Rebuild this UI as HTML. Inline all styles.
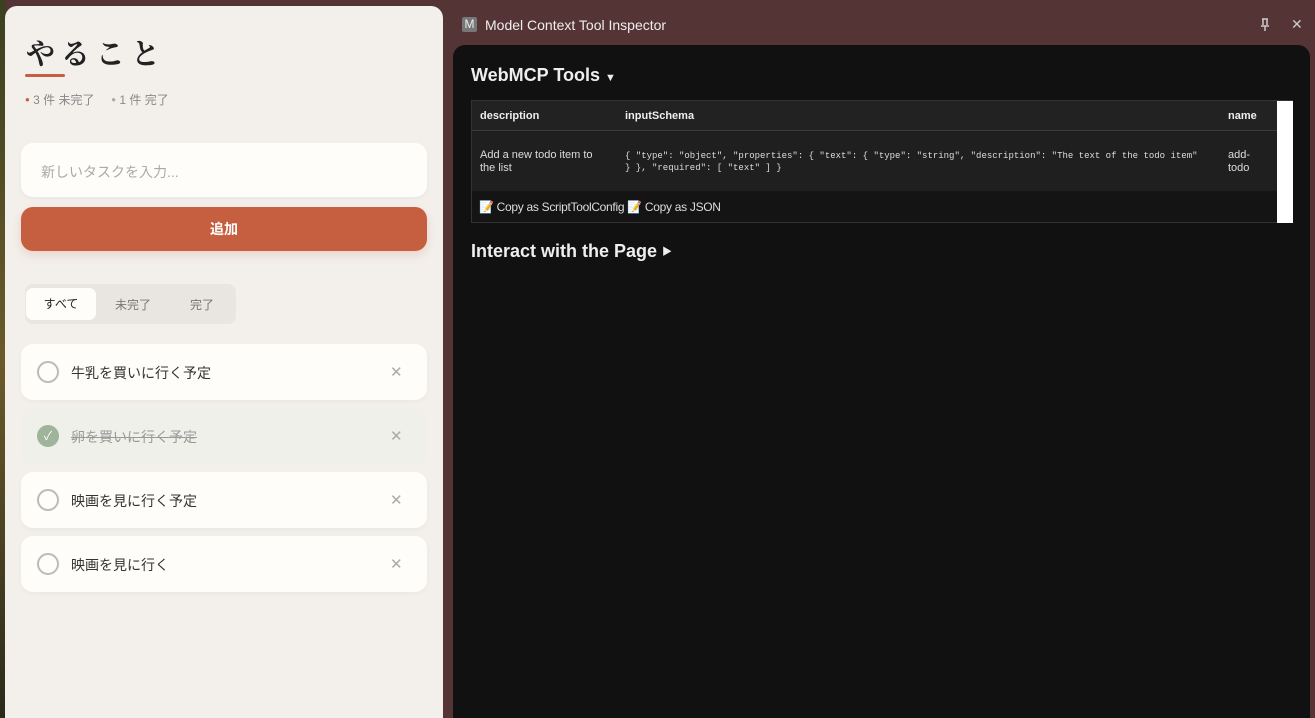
<!DOCTYPE html>
<html><head><meta charset="utf-8"><style>
*{box-sizing:border-box;margin:0;padding:0}
body{width:1315px;height:718px;overflow:hidden;background:#553436;font-family:"Liberation Sans","Noto Sans CJK JP",sans-serif;position:relative}
.bgl{position:absolute;left:0;top:0;width:6px;height:718px;background:linear-gradient(#3a4020,#6b5a2a,#2a2a1a)}
.left{position:absolute;left:5px;top:6px;width:438px;height:712px;background:#f3f0ec;border-radius:12px 12px 0 0}
.ab{position:absolute}
h1{position:absolute;left:21px;top:27px;font-family:"Noto Serif CJK SC","Noto Serif CJK JP",serif;font-size:29px;font-weight:700;letter-spacing:6px;color:#222;line-height:40px}
.card{position:absolute;left:16px;width:406px;background:#fffdfa;border-radius:12px;box-shadow:0 2px 6px rgba(0,0,0,0.04)}
.todo{height:56px;font-size:14px;color:#333}
.todo .c{position:absolute;left:16px;top:17px;width:22px;height:22px;border:2px solid #bbb;border-radius:50%}
.todo .t{position:absolute;left:50px;top:19px}
.todo .x{position:absolute;left:369px;top:19px;color:#aaa;font-size:15px}
.right{position:absolute;left:453px;top:45px;width:857px;height:673px;background:#111;border-radius:12px 12px 0 0}
.mono{font-family:"Liberation Mono","DejaVu Sans Mono",monospace}
</style></head><body>
<div class="bgl"></div>
<div class="left">
<h1>やること</h1>
<div class="ab" style="left:20px;top:68px;width:40px;height:3px;background:#c65f3f;border-radius:2px"></div>
<div class="ab" style="left:20px;top:85px;font-size:12px;color:#888"><span style="color:#c65f3f;font-size:8px;vertical-align:2px">●</span> 3 件 未完了 &nbsp;&nbsp;&nbsp; <span style="color:#aaa;font-size:8px;vertical-align:2px">●</span> 1 件 完了</div>
<div class="card" style="top:137px;height:54px"><span class="ab" style="left:20px;top:19px;font-size:14px;color:#aaa">新しいタスクを入力...</span></div>
<div class="ab" style="left:16px;top:201px;width:406px;height:44px;background:#c65f3f;border-radius:12px;color:#fff;font-weight:bold;font-size:14px;text-align:center;line-height:44px;box-shadow:0 4px 10px rgba(198,95,63,0.2)">追加</div>
<div class="ab" style="left:20px;top:278px;width:211px;height:40px;background:#e9e6e2;border-radius:8px"></div>
<div class="ab" style="left:21px;top:282px;width:70px;height:32px;background:#fffdfa;border-radius:7px;font-size:12px;text-align:center;line-height:32px;color:#222">すべて</div>
<div class="ab" style="left:110px;top:290px;font-size:12px;color:#777">未完了</div>
<div class="ab" style="left:185px;top:290px;font-size:12px;color:#777">完了</div>
<div class="card todo" style="top:338px"><div class="c"></div><span class="t">牛乳を買いに行く予定</span><span class="x">✕</span></div>
<div class="card todo" style="top:402px;background:#eff0ea;box-shadow:none"><div class="c" style="background:#9fb49a;border-color:#9fb49a;color:#fff;font-size:12px;text-align:center;line-height:18px">✓</div><span class="t" style="color:#999;text-decoration:line-through">卵を買いに行く予定</span><span class="x">✕</span></div>
<div class="card todo" style="top:466px"><div class="c"></div><span class="t">映画を見に行く予定</span><span class="x">✕</span></div>
<div class="card todo" style="top:530px"><div class="c"></div><span class="t">映画を見に行く</span><span class="x">✕</span></div>
</div>
<div class="ab" style="left:462px;top:17px;width:15px;height:15px;background:#777;border-radius:2px;color:#eee;font-size:12px;text-align:center;line-height:15px">M</div>
<div class="ab" style="left:485px;top:17px;color:#eee;font-size:14px">Model Context Tool Inspector</div>
<svg class="ab" style="left:1259px;top:18px" width="12" height="14" viewBox="0 0 12 14"><path d="M3 1h6M4 1v6M8 1v6M2 8h8M6 8v5" stroke="#ccc" stroke-width="1.5" fill="none"/></svg>
<div class="ab" style="left:1291px;top:16px;color:#ccc;font-size:14px">✕</div>
<div class="right">
<div class="ab" style="left:18px;top:20px;color:#eee;font-size:18px;font-weight:bold">WebMCP Tools <span style="font-size:11px">▼</span></div>
<div class="ab" style="left:18px;top:55px;width:822px;height:123px;border:1px solid #333;background:#1d1d1d"></div>
<div class="ab" style="left:824px;top:56px;width:16px;height:122px;background:#fff"></div>
<div class="ab" style="left:19px;top:56px;width:805px;height:30px;background:#222;border-bottom:1px solid #3a3a3a"></div>
<div class="ab" style="left:27px;top:65px;color:#eee;font-size:11px;font-weight:bold">description</div>
<div class="ab" style="left:172px;top:65px;color:#eee;font-size:11px;font-weight:bold">inputSchema</div>
<div class="ab" style="left:775px;top:65px;color:#eee;font-size:11px;font-weight:bold">name</div>
<div class="ab" style="left:19px;top:87px;width:805px;height:59px;background:#1f1f1f"></div>
<div class="ab" style="left:27px;top:104px;width:130px;color:#ddd;font-size:11px;line-height:13px">Add a new todo item to the list</div>
<div class="ab mono" style="left:172px;top:105px;width:600px;color:#ddd;font-size:9px;letter-spacing:0;line-height:12px;white-space:nowrap">{ "type": "object", "properties": { "text": { "type": "string", "description": "The text of the todo item"<br>} }, "required": [ "text" ] }</div>
<div class="ab" style="left:775px;top:104px;color:#ddd;font-size:11px;line-height:13px">add-<br>todo</div>
<div class="ab" style="left:19px;top:146px;width:805px;height:31px;background:#141414"></div>
<div class="ab" style="left:26px;top:155px;color:#ddd;font-size:12px;letter-spacing:-0.3px">📝 Copy as ScriptToolConfig 📝 Copy as JSON</div>
<div class="ab" style="left:18px;top:196px;color:#eee;font-size:18px;font-weight:bold">Interact with the Page <span style="font-size:10px;vertical-align:2px">▶</span></div>
</div>
</body></html>
